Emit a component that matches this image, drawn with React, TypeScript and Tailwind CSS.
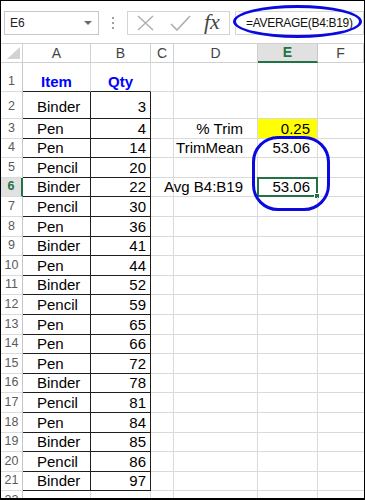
import React from 'react';

const data: [string, number][] = [
  ['Binder', 3],
  ['Pen', 4],
  ['Pen', 14],
  ['Pencil', 20],
  ['Binder', 22],
  ['Pencil', 30],
  ['Pen', 36],
  ['Binder', 41],
  ['Pen', 44],
  ['Binder', 52],
  ['Pencil', 59],
  ['Pen', 65],
  ['Pen', 66],
  ['Pen', 72],
  ['Binder', 78],
  ['Pencil', 81],
  ['Pen', 84],
  ['Binder', 85],
  ['Pencil', 86],
  ['Binder', 97],
];

const side: Record<number, [string, string]> = {
  3: ['% Trim', '0.25'],
  4: ['TrimMean', '53.06'],
  6: ['Avg B4:B19', '53.06'],
};

const cols = ['A', 'B', 'C', 'D', 'E', 'F'];

function pad(r: number) {
  if (r === 2) return 'pb-[3px]';
  return 'pb-[1px]';
}

export default function App() {
  const rowNums = Array.from({ length: 22 }, (_, i) => i + 1);

  return (
    <div
      className="relative w-[365px] h-[500px] overflow-hidden border border-black border-b-2 bg-white text-black"
      style={{ fontFamily: '"Liberation Sans", Arial, sans-serif' }}
    >
      {/* formula bar */}
      <div className="flex items-center h-[24px] mt-[10px] ml-[3px]">
        <div className="flex items-center justify-between w-[95px] h-[24px] border border-[#c6c6c6] pl-[5px] pr-[6px] text-[12px] text-[#222]">
          <span>E6</span>
          <svg width="8" height="5" viewBox="0 0 8 5">
            <polygon points="0,0 8,0 4,4" fill="#6a6a6a" />
          </svg>
        </div>
        <div className="flex flex-col gap-[3px] ml-[13px]">
          <span className="w-[2px] h-[2px] bg-[#a0a0a0]" />
          <span className="w-[2px] h-[2px] bg-[#a0a0a0]" />
          <span className="w-[2px] h-[2px] bg-[#a0a0a0]" />
        </div>
        <div className="flex items-center w-[103px] h-[24px] ml-[13px] border border-[#d4d4d4] pl-[9px]">
          <svg width="17" height="16" viewBox="0 0 17 16">
            <path d="M1 1 L16 15 M16 1 L1 15" stroke="#b0b0b0" strokeWidth="1.5" fill="none" />
          </svg>
          <svg width="21" height="16" viewBox="0 0 21 16" className="ml-[16px]">
            <path d="M1 9 L7 15 L20 1" stroke="#b0b0b0" strokeWidth="1.7" fill="none" />
          </svg>
          <span
            className="ml-[13px] text-[22px] leading-none italic text-[#444] -mt-[2px]"
            style={{ fontFamily: '"Liberation Serif", "Times New Roman", serif' }}
          >
            fx
          </span>
        </div>
        <div className="flex items-center flex-1 h-[24px] ml-[5px] border border-[#d4d4d4] pl-[10px] text-[12px] tracking-[-0.3px] text-[#111]">
          =AVERAGE(B4:B19)
        </div>
      </div>

      {/* sheet grid */}
      <div className="grid mt-[8px] grid-cols-[22px_68px_60px_23px_84px_60px_46px] grid-rows-[20px_29px_27px_repeat(20,19.6px)] text-[15px] leading-[17px]">
        {/* column headers */}
        <div className="flex items-end justify-end pr-[2px] pb-[3px] border-t border-r border-b border-[#d0d0d0]">
          <svg width="13" height="12" viewBox="0 0 13 12">
            <polygon points="13,0 13,12 0,12" fill="#d2d2d2" />
          </svg>
        </div>
        {cols.map((c) =>
          c === 'E' ? (
            <div
              key={c}
              className="flex items-center justify-center bg-[#e1e1e1] border-t border-t-[#d0d0d0] border-r border-r-[#c6c6c6] border-b-2 border-b-[#217346] text-[14px] font-bold text-[#217346]"
            >
              {c}
            </div>
          ) : (
            <div
              key={c}
              className="flex items-center justify-center border-t border-r border-b border-[#d0d0d0] text-[14px] text-[#444]"
            >
              {c}
            </div>
          )
        )}

        {rowNums.map((r) => {
          const item = r >= 2 && r <= 21 ? data[r - 2] : null;
          const s = side[r];
          const p = pad(r);
          return (
            <React.Fragment key={r}>
              <div
                className={
                  r === 6
                    ? `flex items-end justify-center ${p} bg-[#e1e1e1] border-b border-b-[#dadada] border-r-2 border-r-[#217346] text-[12.5px] font-bold text-[#217346]`
                    : `flex items-end justify-center ${p} border-b border-b-[#dadada] border-r border-r-[#c6c6c6] text-[12.5px] text-[#5a5a5a]`
                }
              >
                {r}
              </div>

              {/* column A */}
              {r === 1 ? (
                <div className={`flex items-end justify-center ${p} border-b border-b-[#1e1e1e] border-r border-r-[#dadada] font-bold text-[#0000ff]`}>
                  Item
                </div>
              ) : item ? (
                <div className={`flex items-end pl-[14px] ${p} border-b border-b-[#1e1e1e] border-r border-r-[#1e1e1e]`}>
                  {item[0]}
                </div>
              ) : (
                <div className="border-b border-r border-[#dadada]" />
              )}

              {/* column B */}
              {r === 1 ? (
                <div className={`flex items-end justify-center ${p} border-b border-b-[#1e1e1e] border-r border-r-[#dadada] font-bold text-[#0000ff]`}>
                  Qty
                </div>
              ) : item ? (
                <div className={`flex items-end justify-end pr-[4px] ${p} border-b border-b-[#1e1e1e] border-r border-r-[#1e1e1e]`}>
                  {item[1]}
                </div>
              ) : (
                <div className="border-b border-r border-[#dadada]" />
              )}

              {/* column C */}
              <div className="border-b border-r border-[#dadada]" />

              {/* column D */}
              <div className={`flex items-end justify-end pr-[14px] ${p} whitespace-nowrap border-b border-r border-[#dadada]`}>
                {s ? <span className="shrink-0">{s[0]}</span> : null}
              </div>

              {/* column E */}
              <div
                className={
                  r === 3
                    ? `flex items-end justify-end pr-[7px] ${p} bg-[#ffff00] border-b border-r border-[#dadada]`
                    : `relative flex items-end justify-end pr-[7px] ${p} border-b border-r border-[#dadada]`
                }
              >
                {s ? s[1] : null}
                {r === 6 && (
                  <>
                    <div className="absolute -left-[1px] -top-[1px] -right-[1px] -bottom-[1px] border-2 border-[#217346]" />
                    <div className="absolute -right-[3px] -bottom-[3px] w-[6px] h-[6px] bg-[#217346] border border-white" />
                  </>
                )}
              </div>

              {/* column F */}
              <div className="border-b border-[#dadada]" />
            </React.Fragment>
          );
        })}
      </div>

      {/* annotations */}
      <div className="absolute left-[232px] top-[4px] w-[129px] h-[33px] rounded-[50%] border-[3px] border-[#0a0ae0]" />
      <div className="absolute left-[251px] top-[135px] w-[78px] h-[75px] rounded-[26px] border-[3px] border-[#0a0ae0]" />
    </div>
  );
}
